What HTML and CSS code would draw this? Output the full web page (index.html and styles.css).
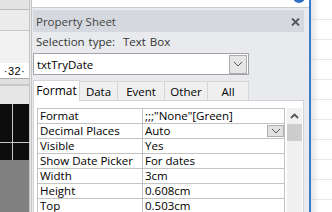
FILE: index.html
```html
<!DOCTYPE html>
<html>
<head>
<meta charset="utf-8">
<link rel="stylesheet" href="styles.css">
</head>
<body>
<div class="design">
  <div class="band1"></div>
  <div class="band2"></div>
  <div class="band3"></div>
  <div class="ruler">·32·</div>
  <div class="band4"></div>
  <div class="band5"></div>
  <div class="canvas"></div>
  <div class="grayarea"></div>
</div>
<div class="panel">
  <div class="topstrip"><div class="bluedot"></div></div>
  <div class="titlebar">
    <span class="title">Property Sheet</span>
    <svg class="close" width="9" height="8" viewBox="0 0 9 8"><path d="M1 0.5 L8 7.5 M8 0.5 L1 7.5" stroke="#555" stroke-width="1.8" fill="none"/></svg>
  </div>
  <div class="seltype">Selection type:&nbsp; Text Box</div>
  <div class="combo">
    <span class="combo-text">txtTryDate</span>
    <span class="combo-btn"><svg width="10" height="6" viewBox="0 0 10 6"><path d="M1 1 L5 5 L9 1" stroke="#555" stroke-width="1" fill="none"/></svg></span>
  </div>
  <div class="tabs">
    <div class="tab active">Format</div>
    <div class="tab t-data">Data</div>
    <div class="tab t-event">Event</div>
    <div class="tab t-other">Other</div>
    <div class="tab t-all">All</div>
  </div>
  <div class="content">
    <table class="props">
      <tr><td class="lbl">Format</td><td class="val">;;;"None"[Green]</td></tr>
      <tr><td class="lbl">Decimal Places</td><td class="val"><div class="valwrap"><span>Auto</span><span class="dd"><svg width="10" height="6" viewBox="0 0 10 6"><path d="M1 1 L5 5 L9 1" stroke="#555" stroke-width="1" fill="none"/></svg></span></div></td></tr>
      <tr><td class="lbl">Visible</td><td class="val">Yes</td></tr>
      <tr><td class="lbl">Show Date Picker</td><td class="val">For dates</td></tr>
      <tr><td class="lbl">Width</td><td class="val">3cm</td></tr>
      <tr><td class="lbl">Height</td><td class="val">0.608cm</td></tr>
      <tr><td class="lbl">Top</td><td class="val">0.503cm</td></tr>
    </table>
    <div class="scrollbar">
      <div class="sb-up"><svg width="9" height="6" viewBox="0 0 9 6"><path d="M1 5 L4.5 1.5 L8 5" stroke="#555" stroke-width="1.8" fill="none"/></svg></div>
      <div class="sb-thumb"></div>
    </div>
  </div>
</div>
<div class="blueline"></div>
<div class="rightarea"></div>
</body>
</html>
```

FILE: styles.css
```css
html, body {
  margin: 0;
  padding: 0;
}
body {
  width: 332px;
  height: 212px;
  overflow: hidden;
  display: flex;
  font-family: "Open Sans", "Noto Sans", sans-serif;
  font-size: 11px;
  color: #000;
  background: #fff;
}

/* left design area */
.design {
  width: 29px;
  flex: none;
  display: flex;
  flex-direction: column;
}
.band1 { height: 9px; background: #e3e3e3; border-bottom: 1px solid #bdbdbd; }
.band2 { height: 20px; background: #ebebeb; border-bottom: 1px solid #c6c6c6; }
.band3 { height: 32px; background: #f2f2f2; }
.ruler {
  height: 15px;
  background: #fff;
  border-bottom: 1px solid #a8a8a8;
  font-size: 11px;
  line-height: 16px;
  text-align: center;
  color: #000;
  font-family: "Liberation Sans", sans-serif;
  white-space: nowrap;
  letter-spacing: 0.5px;
}
.band4 { height: 5px; background: #e0e0e0; border-bottom: 2px solid #c8c8c8; }
.band5 { height: 18px; background: #e6e6e6; }
.canvas {
  height: 56px;
  background:
    linear-gradient(#c8c8c8, #c8c8c8) 12px 0 / 1px 100% no-repeat,
    linear-gradient(#c8c8c8, #c8c8c8) 0 38px / 100% 1px no-repeat,
    #0d0d0d;
}
.grayarea { flex: 1; background: #808080; }

/* property sheet panel */
.panel {
  width: 271px;
  flex: none;
  border-left: 3px double #c4c4c4;
  background: #e8eaed;
  padding: 0 5px 0 1px;
  display: flex;
  flex-direction: column;
}
.topstrip {
  flex: none;
  height: 7px;
  margin: 0 -5px 0 -1px;
  background: #fff;
  border-bottom: 1px solid #c9c9c9;
  display: flex;
  justify-content: flex-end;
  overflow: hidden;
}
.bluedot {
  width: 12px;
  height: 12px;
  border-radius: 50%;
  background: #2f6fc6;
  margin: -9px 4px 0 0;
}
.titlebar {
  flex: none;
  margin-top: 2px;
  height: 22px;
  background: #d5d9df;
  display: flex;
  align-items: center;
  justify-content: space-between;
  padding: 0 4px 0 3px;
}
.title { font-size: 11.5px; color: #444; }
.close { display: block; margin-top: 1px; }
.seltype {
  flex: none;
  height: 16px;
  margin-top: 2px;
  line-height: 16px;
  padding-left: 3px;
  color: #333;
  font-size: 11.5px;
  word-spacing: 1px;
}
.combo {
  flex: none;
  margin-top: 3px;
  width: 214px;
  height: 20px;
  border: 1px solid #a3a3a3;
  background: #fff;
  display: flex;
  align-items: center;
  justify-content: space-between;
}
.combo-text { padding-left: 3px; font-size: 11.5px; }
.combo-btn {
  width: 16px;
  height: 17px;
  margin-right: 1px;
  background: #e5e5e5;
  border: 1px solid #acacac;
  display: flex;
  align-items: center;
  justify-content: center;
}
.tabs {
  flex: none;
  margin-top: 5px;
  height: 20px;
  display: flex;
  align-items: flex-end;
  position: relative;
  z-index: 1;
}
.tab {
  height: 18px;
  background: #efefef;
  border: 1px solid #d6d6d6;
  border-bottom: none;
  margin-left: -1px;
  display: flex;
  align-items: center;
  justify-content: center;
  font-size: 11.5px;
}
.tab.active {
  margin-left: 0;
  background: #fff;
  font-size: 12px;
  margin-bottom: -1px;
  align-items: flex-start;
  padding-top: 1px;
  box-sizing: border-box;
  height: 21px;
  width: 47px;
}
.t-data { width: 37px; }
.t-event { width: 46px; }
.t-other { width: 42px; }
.t-all { width: 40px; }

.content {
  flex: 1;
  background: #fff;
  border: 1px solid #d3d3d3;
  border-bottom: none;
  display: flex;
  align-items: flex-start;
  padding: 7px 0 0 3px;
}
.props {
  border-collapse: collapse;
  width: 248px;
  table-layout: fixed;
}
.props td {
  border: 1px solid #c3c3c3;
  height: 14px;
  padding: 0 0 0 2px;
  line-height: 14px;
  white-space: nowrap;
  overflow: hidden;
  font-size: 11.5px;
}
.props td.lbl { width: 102px; }
.valwrap {
  display: flex;
  justify-content: space-between;
  align-items: center;
}
.dd {
  width: 15px;
  height: 10px;
  background: #e1e1e1;
  border: 1px solid #adadad;
  display: flex;
  align-items: center;
  justify-content: center;
}
.scrollbar {
  margin-left: 2px;
  width: 15px;
  height: 110px;
  background: #f0f0f0;
}
.sb-up {
  height: 16px;
  display: flex;
  align-items: center;
  justify-content: center;
}
.sb-up svg { display: block; }
.sb-thumb {
  height: 17px;
  background: #cdcdcd;
}

.blueline {
  width: 2px;
  flex: none;
  background: #3a7dd0;
}
.rightarea {
  flex: 1;
  background:
    linear-gradient(to right, rgba(0,0,0,0.10), rgba(0,0,0,0) 8px),
    repeating-linear-gradient(to bottom, #fff 0, #fff 19px, #e9e9e9 19px, #e9e9e9 20px);
}
```
